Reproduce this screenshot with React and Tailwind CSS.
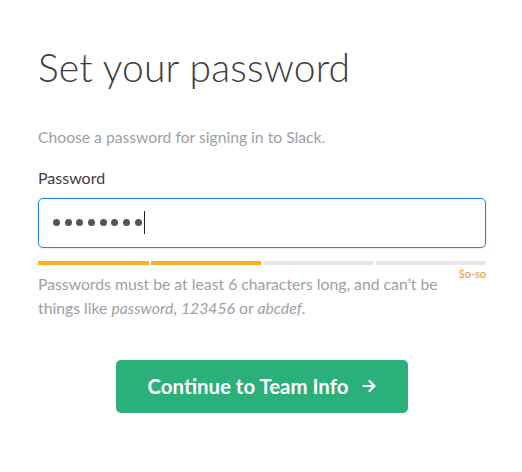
import React from "react";

const strength = [true, true, false, false];

export default function App() {
  return (
    <div className="min-h-[472px] w-[522px] bg-white font-['Lato','Noto_Sans',sans-serif]">
      <div className="ml-[38px] w-[448px] pt-[44px]">
        <h1 className="text-[39px] font-light leading-[1.2] tracking-[0.2px] text-[#3d3c40]">
          Set your password
        </h1>
        <p className="mt-[34px] text-[15.7px] leading-[24px] text-[#9e9ea6]">
          Choose a password for signing in to Slack.
        </p>

        <label className="mt-[17px] block text-[16px] leading-[24px] text-[#3d3c40]">
          Password
        </label>
        <div className="mt-[8px] flex h-[50px] items-center rounded-[5px] border border-[#2780f8] pl-[14px] shadow-[0_0_2px_rgba(39,128,248,0.4)]">
          <span className="flex items-center gap-[4.7px]" aria-label="password">
            {Array.from({ length: 8 }).map((_, i) => (
              <span key={i} className="h-[7px] w-[7px] rounded-full bg-[#555459]" />
            ))}
          </span>
          <span className="ml-[2px] h-[23px] w-px bg-[#222]" />
        </div>

        <div className="mt-[13px] flex gap-[2px]">
          {strength.map((on, i) => (
            <div
              key={i}
              className={on ? "h-[4px] flex-1 bg-[#fcad20]" : "h-[4px] flex-1 bg-[#e8e8e8]"}
            />
          ))}
        </div>

        <div className="pt-[2px]">
          <span className="float-right text-[11px] leading-[1.2] text-[#eb8f2d]">So-so</span>
          <p className="pt-[5px] text-[15.75px] leading-[24px] text-[#9e9ea6]">
            Passwords must be at least 6 characters long, and can’t be things like{" "}
            <em>password</em>, <em>123456</em> or <em>abcdef</em>.
          </p>
        </div>

        <div className="mt-[40px] flex justify-center">
          <button className="flex h-[53px] w-[292px] items-center justify-center gap-[14px] rounded-[5px] bg-[#2bb07b] text-[20.4px] font-bold text-white">
            <span>Continue to Team Info</span>
            <svg width="14" height="14" viewBox="0 0 14 14" fill="none" stroke="white" strokeWidth="2.2" strokeLinecap="round" strokeLinejoin="round">
              <path d="M1.5 7h11M7.5 2l5 5-5 5" />
            </svg>
          </button>
        </div>
      </div>
    </div>
  );
}
